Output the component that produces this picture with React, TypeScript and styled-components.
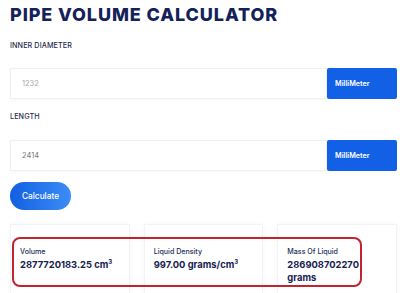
import React from "react";
import styled, { createGlobalStyle } from "styled-components";

const Global = createGlobalStyle`
  html, body { margin: 0; padding: 0; background: #ffffff; }
  body { font-family: Inter, "Noto Sans", sans-serif; overflow: hidden; }
  * { box-sizing: border-box; }
`;

const Page = styled.div`
  width: 400px;
  height: 293px;
  padding: 7px 3px 0 10px;
  position: relative;
  overflow: hidden;
`;

const Title = styled.h1`
  margin: 0;
  font-family: Inter, sans-serif;
  font-weight: 800;
  font-size: 18px;
  line-height: 16px;
  color: #14215a;
  letter-spacing: 0.9px;
`;

const Label = styled.div<{ $mt: number }>`
  margin-top: ${(p) => p.$mt}px;
  font-family: Inter, sans-serif;
  font-size: 7.2px;
  font-weight: 500;
  line-height: 8px;
  color: #1f2a4d;
  letter-spacing: 0.1px;
`;

const InputRow = styled.div<{ $mt: number }>`
  margin-top: ${(p) => p.$mt}px;
  display: flex;
  height: 31px;
`;

const Field = styled.div<{ $dark?: boolean }>`
  flex: 1;
  display: flex;
  align-items: center;
  padding-left: 11px;
  background: #fff;
  border: 1px solid #f0f0f0;
  box-shadow: 0 1px 3px rgba(0, 0, 0, 0.04);
  font-family: Inter, sans-serif;
  font-size: 7.5px;
  color: ${(p) => (p.$dark ? "#777" : "#aaa")};
`;

const Unit = styled.div`
  width: 70px;
  display: flex;
  align-items: center;
  padding-left: 8px;
  background: #1160e6;
  border-radius: 2px;
  color: #fff;
  font-family: Inter, sans-serif;
  font-size: 7.2px;
  font-weight: 600;
`;

const CalcButton = styled.button`
  margin-top: 11px;
  width: 61px;
  height: 28px;
  border: none;
  border-radius: 14px;
  background: linear-gradient(90deg, #135fe2 0%, #3c8df5 100%);
  color: #fff;
  font-family: Inter, sans-serif;
  font-size: 8.3px;
  font-weight: 500;
  padding: 0;
  display: block;
`;

const Cards = styled.div`
  margin-top: 14px;
  display: grid;
  grid-template-columns: repeat(3, 1fr);
  column-gap: 14px;
`;

const Card = styled.div`
  height: 90px;
  background: #fff;
  border: 1px solid #f3f3f3;
  box-shadow: 0 0 4px rgba(0, 0, 0, 0.04);
  padding: 22px 14px 0 9px;
`;

const CardLabel = styled.div`
  font-family: Inter, sans-serif;
  font-size: 7.1px;
  font-weight: 500;
  color: #22305c;
  line-height: 9px;
`;

const CardValue = styled.div`
  margin-top: 2px;
  font-family: Inter, sans-serif;
  font-size: 9.4px;
  font-weight: 700;
  color: #16214f;
  line-height: 13px;
  sup { font-size: 6px; line-height: 0; vertical-align: 4px; }
`;

const Highlight = styled.div`
  position: absolute;
  left: 12px;
  top: 237px;
  width: 350px;
  height: 50px;
  border: 2px solid #c2232c;
  border-radius: 8px;
  pointer-events: none;
`;

export default function App() {
  return (
    <>
      <Global />
      <Page>
        <Title>PIPE VOLUME CALCULATOR</Title>
        <Label $mt={19}>INNER DIAMETER</Label>
        <InputRow $mt={18}>
          <Field>1232</Field>
          <Unit>MilliMeter</Unit>
        </InputRow>
        <Label $mt={14}>LENGTH</Label>
        <InputRow $mt={19}>
          <Field $dark>2414</Field>
          <Unit>MilliMeter</Unit>
        </InputRow>
        <CalcButton>Calculate</CalcButton>
        <Cards>
          <Card>
            <CardLabel>Volume</CardLabel>
            <CardValue>
              2877720183.25 cm<sup>3</sup>
            </CardValue>
          </Card>
          <Card>
            <CardLabel>Liquid Density</CardLabel>
            <CardValue>
              997.00 grams/cm<sup>3</sup>
            </CardValue>
          </Card>
          <Card>
            <CardLabel>Mass Of Liquid</CardLabel>
            <CardValue>286908702270 grams</CardValue>
          </Card>
        </Cards>
        <Highlight />
      </Page>
    </>
  );
}
